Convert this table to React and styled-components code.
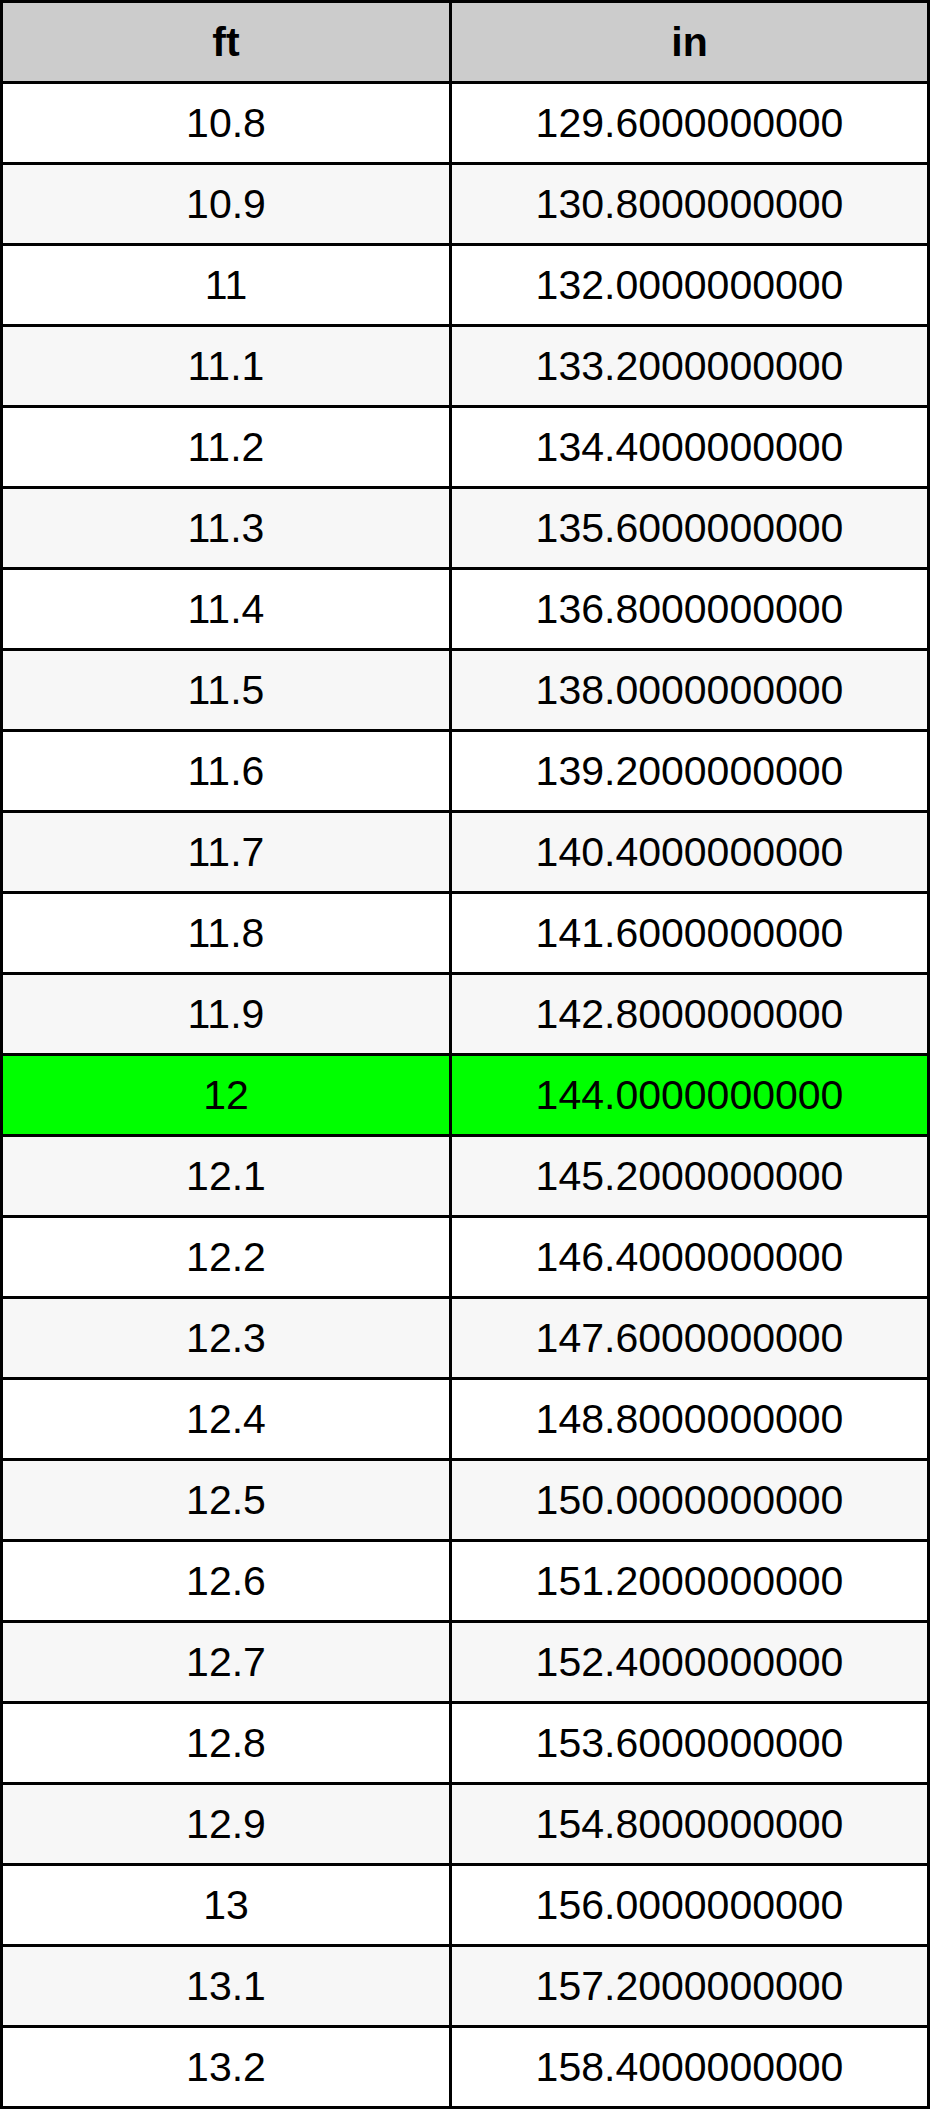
import React from 'react';
import styled, { createGlobalStyle } from 'styled-components';

const GlobalStyle = createGlobalStyle`
  body {
    margin: 0;
    background: #fff;
    font-family: "Liberation Sans", Arial, sans-serif;
  }
`;

const Table = styled.div`
  display: grid;
  grid-template-columns: 446px 475px;
  grid-auto-rows: 78px;
  gap: 3px;
  padding: 3px;
  width: max-content;
  background: #000;
`;

const Cell = styled.div`
  display: flex;
  align-items: center;
  justify-content: center;
  font-size: 41px;
  color: #000;
  font-weight: ${(p) => (p.$head ? 700 : 400)};
  background: ${(p) =>
    p.$head ? '#cccccc' : p.$hit ? '#00ff00' : p.$odd ? '#f7f7f7' : '#ffffff'};
`;

const rows = [];
for (let i = 0; i < 25; i++) {
  const ft = Math.round((10.8 + i * 0.1) * 10) / 10;
  rows.push({ ft: String(ft), inch: (ft * 12).toFixed(10) });
}

const App = () => (
  <>
    <GlobalStyle />
    <Table>
      <Cell $head>ft</Cell>
      <Cell $head>in</Cell>
      {rows.map((r, i) => (
        <React.Fragment key={r.ft}>
          <Cell $odd={i % 2 === 1} $hit={r.ft === '12'}>{r.ft}</Cell>
          <Cell $odd={i % 2 === 1} $hit={r.ft === '12'}>{r.inch}</Cell>
        </React.Fragment>
      ))}
    </Table>
  </>
);

export default App;
